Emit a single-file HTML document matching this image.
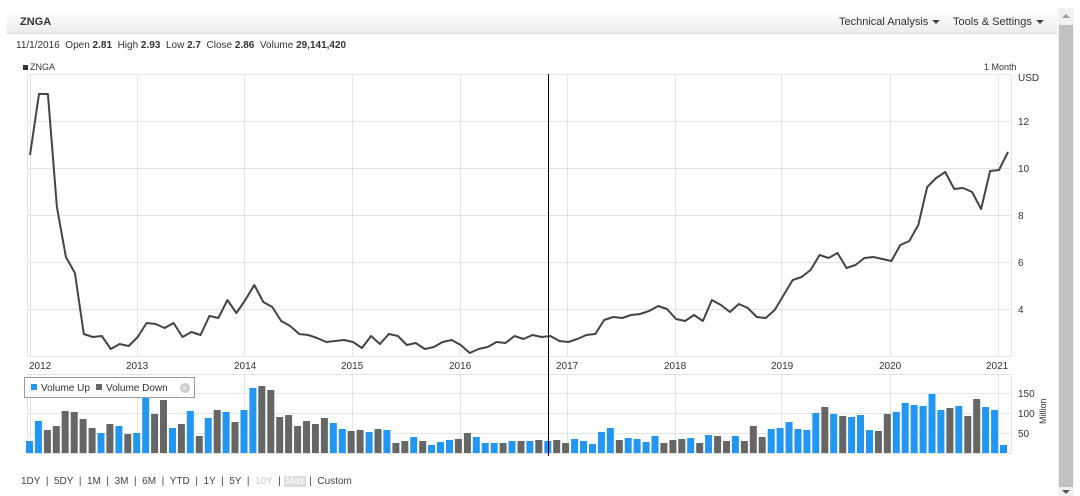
<!DOCTYPE html>
<html><head><meta charset="utf-8"><style>
*{margin:0;padding:0;box-sizing:border-box}
body{width:1080px;height:496px;background:#fff;font-family:"Liberation Sans",Arial,sans-serif;color:#333;position:relative;overflow:hidden}
.hdr{position:absolute;left:7px;top:8px;width:1050px;height:26px;background:linear-gradient(#fff,#ececec);border-bottom:1px solid #ddd}
.hdr .t{position:absolute;left:13px;top:8px;font-size:11px;font-weight:bold;color:#333}
.hdr .m{position:absolute;top:8px;font-size:11px;color:#333}
.tri{display:inline-block;width:0;height:0;border-left:4px solid transparent;border-right:4px solid transparent;border-top:4px solid #444;margin-left:4px;vertical-align:1px}
.info{position:absolute;left:16px;top:40px;font-size:10px;color:#333}
.info b{font-weight:bold}
.sb{position:absolute;left:1058px;top:8px;width:16px;height:488px;background:#f1f1f1}
.sb .th{position:absolute;left:1px;top:17px;width:14px;height:462px;background:#c1c1c1}
.sm{position:absolute;font-size:10px;color:#333}
.rng{position:absolute;left:21px;top:476px;font-size:10px;color:#444;word-spacing:0}
.rng .d{color:#ccc}
.rng .mx{background:#ddd;color:#fff;padding:0 2px}
</style></head><body>
<div class="hdr"><span class="t">ZNGA</span>
<span class="m" style="left:832px">Technical Analysis<span class="tri"></span></span>
<span class="m" style="left:946px">Tools &amp; Settings<span class="tri"></span></span></div>
<div class="info">11/1/2016 &nbsp;Open <b>2.81</b> &nbsp;High <b>2.93</b> &nbsp;Low <b>2.7</b> &nbsp;Close <b>2.86</b> &nbsp;Volume <b>29,141,420</b></div>
<div class="sb"><div class="th"></div><div style="position:absolute;left:4px;top:6px;border-left:4px solid transparent;border-right:4px solid transparent;border-bottom:4px solid #999"></div><div style="position:absolute;left:4px;top:482px;border-left:4px solid transparent;border-right:4px solid transparent;border-top:4px solid #555"></div></div>
<div class="sm" style="left:23px;top:62px;font-size:9px"><span style="display:inline-block;width:5px;height:5px;background:#333;margin-right:2px"></span>ZNGA</div>
<div class="sm" style="left:984px;top:62px;font-size:9px">1 Month</div>
<svg id="c" width="1080" height="496" style="position:absolute;left:0;top:0" xmlns="http://www.w3.org/2000/svg" font-family="Liberation Sans, Arial, sans-serif" font-size="10" fill="#333">
<g id="grid" stroke="#e4e4e4" stroke-width="1" fill="none"></g>
<g id="bars"></g>
<polyline id="pl" fill="none" stroke="#444" stroke-width="2" stroke-linejoin="round"/>
<line x1="548.5" y1="74" x2="548.5" y2="456" stroke="#000" stroke-width="1"/>
<text x="1018" y="81">USD</text>
<text x="1018" y="125">12</text><text x="1018" y="172">10</text><text x="1018" y="219">8</text><text x="1018" y="266">6</text><text x="1018" y="313">4</text>
<text x="1018" y="397">150</text><text x="1018" y="417">100</text><text x="1018" y="437">50</text>
<text transform="translate(1046,424) rotate(-90)" font-size="9">Million</text>
<g font-size="10"><text x="29" y="369">2012</text><text x="126" y="369">2013</text><text x="234" y="369">2014</text><text x="341" y="369">2015</text><text x="449" y="369">2016</text><text x="556" y="369">2017</text><text x="664" y="369">2018</text><text x="771" y="369">2019</text><text x="879" y="369">2020</text><text x="986" y="369">2021</text></g>
<rect x="24.5" y="377.5" width="170" height="20" fill="#fff" stroke="#999"/>
<rect x="31" y="384" width="6" height="6" fill="#2196f3"/><text x="41" y="391" font-size="10">Volume Up</text>
<rect x="96" y="384" width="6" height="6" fill="#666"/><text x="106" y="391" font-size="10">Volume Down</text>
<circle cx="185" cy="388" r="5" fill="#ccc"/><text x="182" y="391" font-size="8" fill="#fff">×</text>
</svg>
<div class="rng">1DY &nbsp;| &nbsp;5DY &nbsp;| &nbsp;1M &nbsp;| &nbsp;3M &nbsp;| &nbsp;6M &nbsp;| &nbsp;YTD &nbsp;| &nbsp;1Y &nbsp;| &nbsp;5Y &nbsp;| &nbsp;<span class="d">10Y</span> &nbsp;| <span class="mx">Max</span> | &nbsp;Custom</div>
<script>
var ns="http://www.w3.org/2000/svg";
function el(p,t,a){var e=document.createElementNS(ns,t);for(var k in a)e.setAttribute(k,a[k]);p.appendChild(e);return e;}
var g=document.getElementById('grid');
el(g,'rect',{x:27.5,y:74.5,width:984,height:282});
el(g,'rect',{x:27.5,y:374.5,width:984,height:79});
[121,168,215,262,309].forEach(function(y){el(g,'line',{x1:27,x2:1011,y1:y+.5,y2:y+.5});});
[393,413,433].forEach(function(y){el(g,'line',{x1:27,x2:1011,y1:y+.5,y2:y+.5});});
[30,137,244,352,460,567,675,781,890,998].forEach(function(x){el(g,'line',{x1:x+.5,x2:x+.5,y1:74,y2:356});el(g,'line',{x1:x+.5,x2:x+.5,y1:374,y2:453});});
var py=[155,94,94,207,257,273,334,337,336,349,344,346,337,323,324,328,323,337,332,335,316,318,300,313,300,285,302,307,321,326,334,335,338,342,341,340,342,348,336,344,334,336,345,343,349,347,342,340,345,353,349,347,342,343,336,339,335,337,336,341,342,339,335,334,320,317,318,315,314,311,306,309,319,321,315,321,300,305,312,304,308,317,318,310,295,280,277,270,255,258,253,268,265,258,257,259,261,245,241,225,187,178,172,189,188,192,209,171,170,152];
var pts=py.map(function(y,i){return (30+i*978/(py.length-1)).toFixed(1)+','+y;}).join(' ');
document.getElementById('pl').setAttribute('points',pts);
var v="441b421b430g426g411g412g419g428g433b424g426b434g433b397b414g400g428b424g411b436g418b410g412b422g410b388b386g390g417g415g426g421g424g418g423b429b431g430g432b429g430b443g441g437b441g445b442b440b439g433g437b443b443b443g441b441g441b440g441b440g443g439b441b444b432b428b440g438b439b442b436b443g440g439g438b443g435b436g441g436b441g426g437g429b428b422b429b430b413b407g414b416g417b415b430b431g414g412b403b405b406b394b410b408g406b416g399g407b410b445b";
var m=v.match(/\d+[bg]/g),b=document.getElementById('bars');
m.forEach(function(s,i){var y=parseInt(s),c=s.slice(-1)=='b'?'#2196f3':'#666';var x=26+i*(974/(m.length-1));
el(b,'rect',{x:x.toFixed(1),y:y,width:7,height:453-y,fill:c});});
</script>
</body></html>
